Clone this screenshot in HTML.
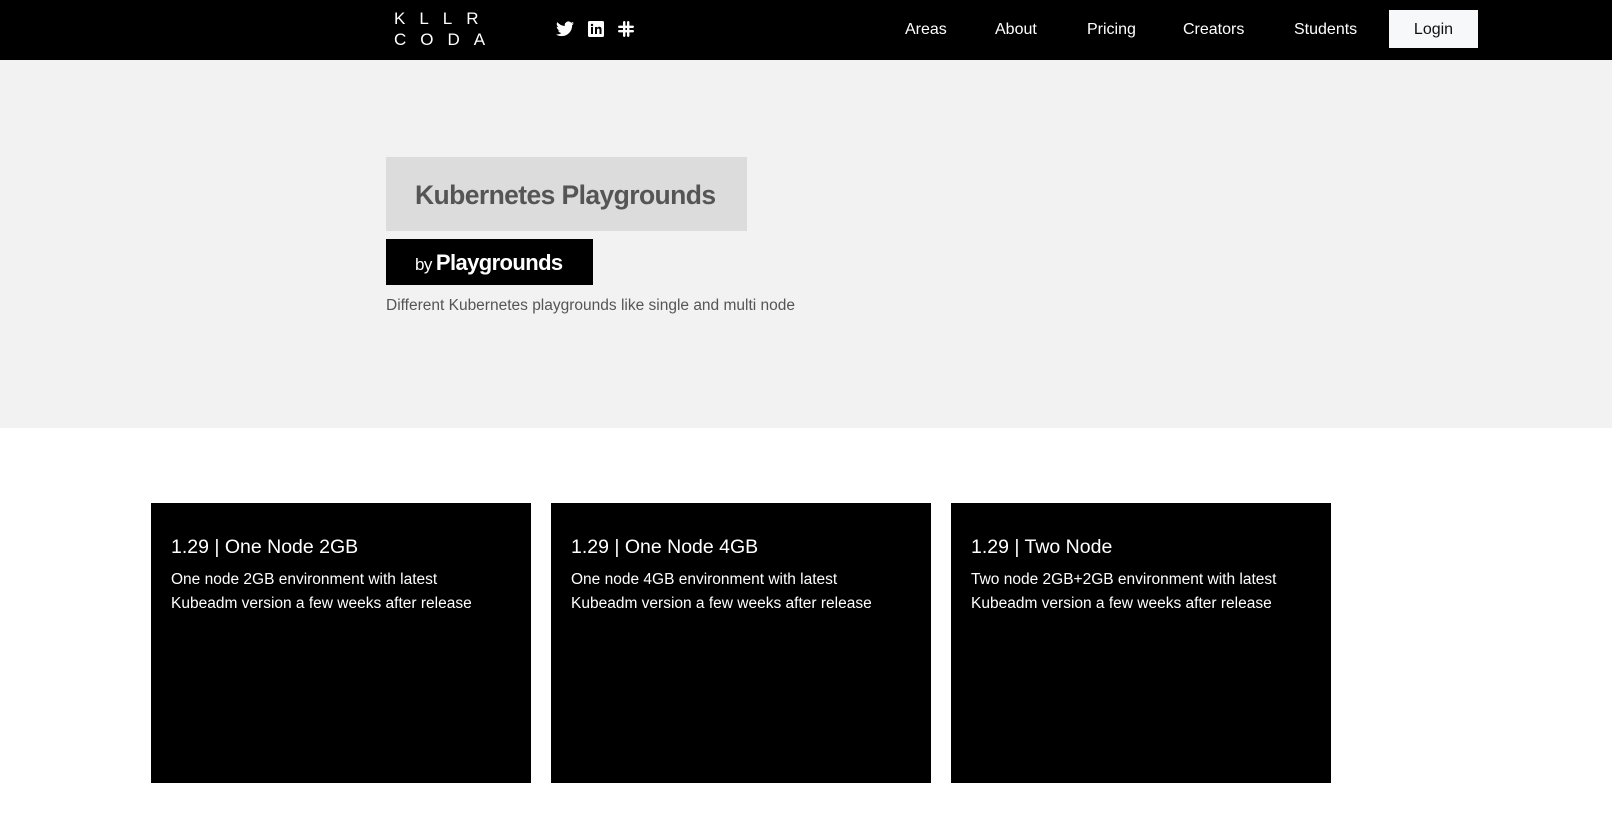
<!DOCTYPE html>
<html><head><meta charset="utf-8"><style>
*{margin:0;padding:0;box-sizing:border-box}
body{width:1612px;height:831px;background:#fff;font-family:"Liberation Sans",sans-serif;overflow:hidden;position:relative}
.hdr{position:absolute;left:0;top:0;width:1612px;height:60px;background:#000}
.logo{position:absolute;left:394px;top:8px;color:#fff;font-size:17px;letter-spacing:14px;line-height:21px}
.icons{position:absolute;left:556px;top:21px;display:flex;gap:14px}
.nav a{position:absolute;top:21px;color:#fff;font-size:16px;text-decoration:none}
.login{position:absolute;left:1389px;top:10px;width:89px;height:38px;background:#f6f8fa;color:#111;font-size:16px;text-align:center;line-height:40px}
.hero{position:absolute;left:0;top:60px;width:1612px;height:368px;background:#f2f2f2}
.t1{position:absolute;left:386px;top:157px;width:361px;height:74px;background:#dcdcdc;color:#555;font-size:26.5px;font-weight:bold;letter-spacing:-0.6px;padding-left:29px;line-height:76px}
.t2{position:absolute;left:386px;top:239px;width:207px;height:46px;background:#000;color:#fff;padding-left:29px;line-height:48px;font-size:22px;font-weight:bold;letter-spacing:-0.6px}
.t2 span{font-size:17px;font-weight:normal}
.desc{position:absolute;left:386px;top:297px;color:#555;font-size:15.5px}
.card{position:absolute;top:503px;width:380px;height:280px;background:#000;color:#fff;padding:33px 20px}
.card h3{font-weight:normal;font-size:19.5px;margin-bottom:9px}
.card p{font-size:15.5px;line-height:24px;width:330px}
</style></head><body>
<div class="hdr">
<div class="logo">KLLR<br>CODA</div>
<div class="icons">
<svg width="18" height="16" viewBox="0 0 24 20"><path fill="#fff" d="M24 2.4a10 10 0 0 1-2.8.8A5 5 0 0 0 23.3.4a10 10 0 0 1-3.1 1.2A4.9 4.9 0 0 0 11.8 6 14 14 0 0 1 1.7.9a4.9 4.9 0 0 0 1.5 6.6 5 5 0 0 1-2.2-.6 4.9 4.9 0 0 0 3.9 4.9 5 5 0 0 1-2.2.1 4.9 4.9 0 0 0 4.6 3.4A9.9 9.9 0 0 1 0 17.3 14 14 0 0 0 7.5 19.5c9 0 14-7.5 14-14v-.6A10 10 0 0 0 24 2.4z"/></svg>
<svg width="16" height="16" viewBox="0 0 16 16"><rect width="16" height="16" rx="1.5" fill="#fff"/><rect x="3" y="6" width="2" height="7" fill="#000"/><circle cx="4" cy="4" r="1.2" fill="#000"/><path d="M7 6h2v1c.5-.8 1.3-1.2 2.3-1.2 1.6 0 2.2 1 2.2 2.7V13h-2V9c0-1-.3-1.5-1.1-1.5S9 8 9 9v4H7z" fill="#000"/></svg>
<svg width="16" height="16" viewBox="0 0 16 16" fill="#fff"><rect x="5" y="0" width="2.4" height="16" rx="1.2"/><rect x="9" y="0" width="2.4" height="16" rx="1.2"/><rect x="0" y="4.6" width="16" height="2.4" rx="1.2"/><rect x="0" y="9" width="16" height="2.4" rx="1.2"/></svg>
</div>
<div class="nav">
<a style="left:905px">Areas</a><a style="left:995px">About</a><a style="left:1087px">Pricing</a><a style="left:1183px">Creators</a><a style="left:1294px">Students</a>
</div>
<div class="login">Login</div>
</div>
<div class="hero">
</div>
<div class="t1">Kubernetes Playgrounds</div>
<div class="t2"><span>by </span>Playgrounds</div>
<div class="desc">Different Kubernetes playgrounds like single and multi node</div>
<div class="card" style="left:151px"><h3>1.29 | One Node 2GB</h3><p>One node 2GB environment with latest Kubeadm version a few weeks after release</p></div>
<div class="card" style="left:551px"><h3>1.29 | One Node 4GB</h3><p>One node 4GB environment with latest Kubeadm version a few weeks after release</p></div>
<div class="card" style="left:951px"><h3>1.29 | Two Node</h3><p>Two node 2GB+2GB environment with latest Kubeadm version a few weeks after release</p></div>
</body></html>
